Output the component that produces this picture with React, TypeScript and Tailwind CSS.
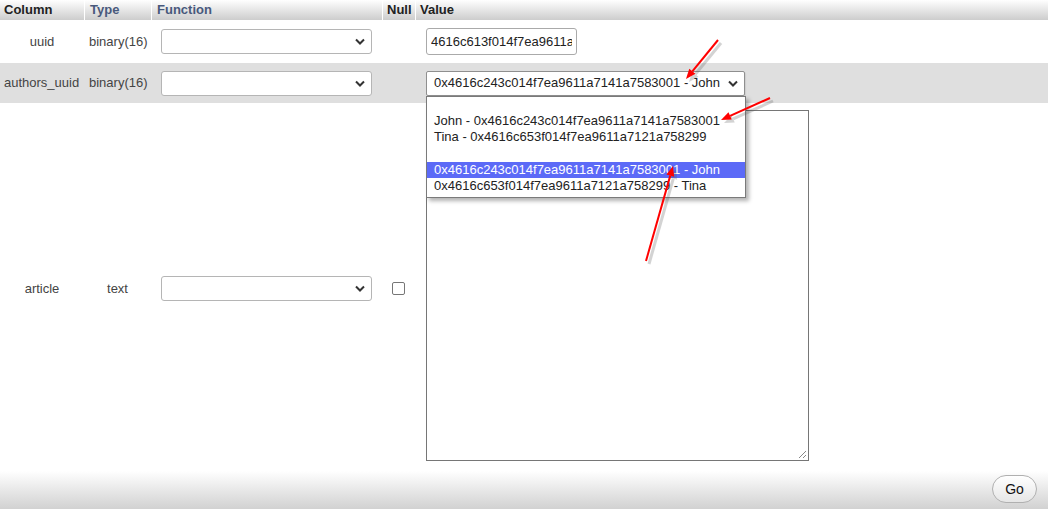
import React from 'react';

const font = { fontFamily: '"Liberation Sans", Arial, sans-serif' };

function Chevron() {
  return (
    <svg width="10" height="7" viewBox="0 0 10 7" className="shrink-0">
      <polyline points="1,1.5 5,5.5 9,1.5" fill="none" stroke="#333" strokeWidth="2" />
    </svg>
  );
}

function FuncSelect() {
  return (
    <div className="w-[211px] h-[25px] bg-white border border-[#b5b5b5] rounded-[3px] flex items-center justify-end pr-[6px]">
      <Chevron />
    </div>
  );
}

function Arrow({ x1, y1, x2, y2 }: { x1: number; y1: number; x2: number; y2: number }) {
  const a = Math.atan2(y2 - y1, x2 - x1);
  const len = 10;
  const w = 4;
  const bx = x2 - Math.cos(a) * len;
  const by = y2 - Math.sin(a) * len;
  const p1 = `${bx + Math.sin(a) * w},${by - Math.cos(a) * w}`;
  const p2 = `${bx - Math.sin(a) * w},${by + Math.cos(a) * w}`;
  return (
    <g>
      <g transform="translate(3,3)" opacity="0.25">
        <line x1={x1} y1={y1} x2={bx} y2={by} stroke="#555" strokeWidth="3" />
        <polygon points={`${x2},${y2} ${p1} ${p2}`} fill="#555" />
      </g>
      <line x1={x1} y1={y1} x2={bx} y2={by} stroke="#ff0000" strokeWidth="2" />
      <polygon points={`${x2},${y2} ${p1} ${p2}`} fill="#ff0000" />
    </g>
  );
}

export default function App() {
  const cols = 'grid grid-cols-[84px_67px_231px_33px_1fr]';
  return (
    <div className="relative w-[1053px] h-[509px] overflow-hidden bg-white text-[13px] text-[#444]" style={font}>
      <div className="w-[1048px]">
        {/* header */}
        <div className={`${cols} h-[20px] bg-gradient-to-b from-white to-[#cdcdcd] font-bold leading-[20px]`}>
          <div className="pl-[4px] text-[#222]">Column</div>
          <div className="pl-[5px] border-l border-white text-[#48597c]">Type</div>
          <div className="pl-[5px] border-l border-white text-[#48597c]">Function</div>
          <div className="pl-[4px] border-l border-white text-[#222]">Null</div>
          <div className="pl-[4px] border-l border-white text-[#222]">Value</div>
        </div>

        {/* uuid */}
        <div className={`${cols} h-[43px] items-center`}>
          <div className="text-center">uuid</div>
          <div className="pl-[5px]">binary(16)</div>
          <div className="pl-[10px]"><FuncSelect /></div>
          <div />
          <div className="pl-[11px]">
            <div className="w-[151px] h-[27px] border border-[#aaa] rounded-[3px] bg-white pl-[4px] pr-[4px] flex items-center overflow-hidden whitespace-nowrap text-[#222]">
              <span className="overflow-hidden">4616c613f014f7ea9611a7141a7583001</span>
            </div>
          </div>
        </div>

        {/* authors_uuid */}
        <div className={`${cols} h-[40px] items-center bg-[#dfdfdf]`}>
          <div className="pl-[4px]">authors_uuid</div>
          <div className="pl-[5px]">binary(16)</div>
          <div className="pl-[10px]"><FuncSelect /></div>
          <div />
          <div className="pl-[11px] relative">
            <div className="w-[319px] h-[25px] border border-[#8f8f8f] rounded-[2px] bg-white pl-[7px] pr-[6px] flex items-center justify-between text-[#222] shadow-[1px_1px_1px_rgba(0,0,0,0.08)]">
              <span>0x4616c243c014f7ea9611a7141a7583001 - John</span>
              <Chevron />
            </div>
            {/* open dropdown list */}
            <div className="absolute left-[11px] top-[25px] z-10 w-[320px] bg-white border border-[#7a7a7a] pb-[3px] shadow-[3px_3px_4px_rgba(0,0,0,0.3)] text-[#222] leading-[16px]">
              <div className="h-[16px]" />
              <div className="h-[16px] pl-[7px]">John - 0x4616c243c014f7ea9611a7141a7583001</div>
              <div className="h-[16px] pl-[7px]">Tina - 0x4616c653f014f7ea9611a7121a758299</div>
              <div className="h-[17px]" />
              <div className="h-[16px] pl-[7px] bg-[#5c6af7] text-white">0x4616c243c014f7ea9611a7141a7583001 - John</div>
              <div className="h-[16px] pl-[7px]">0x4616c653f014f7ea9611a7121a758299 - Tina</div>
            </div>
          </div>
        </div>

        {/* article */}
        <div className={`${cols} items-center pt-[7px] pb-[10px]`}>
          <div className="text-center mt-[6px]">article</div>
          <div className="text-center mt-[6px]">text</div>
          <div className="pl-[10px] mt-[6px]"><FuncSelect /></div>
          <div className="pl-[10px] mt-[6px]">
            <div className="w-[13px] h-[13px] border border-[#767676] rounded-[2px] bg-white" />
          </div>
          <div className="pl-[11px]">
            <div className="relative w-[383px] h-[351px] border border-[#767676] bg-white">
              <svg width="10" height="10" viewBox="0 0 10 10" className="absolute right-[1px] bottom-[1px]">
                <line x1="9" y1="2" x2="2" y2="9" stroke="#888" strokeWidth="1" />
                <line x1="9" y1="6" x2="6" y2="9" stroke="#888" strokeWidth="1" />
              </svg>
            </div>
          </div>
        </div>

        {/* footer */}
        <div className="h-[40px] bg-gradient-to-b from-white to-[#cfcfcf] flex items-start justify-end pr-[11px] pt-[4px]">
          <button className="w-[45px] h-[28px] rounded-full border border-[#b0b0b0] bg-gradient-to-b from-white to-[#e6e6e6] text-[14px] text-[#111]" style={font}>
            Go
          </button>
        </div>
      </div>

      {/* annotation arrows */}
      <svg className="absolute inset-0 pointer-events-none z-20" width="1053" height="509">
        <Arrow x1={718} y1={40} x2={686} y2={79} />
        <Arrow x1={770} y1={98} x2={721} y2={120} />
        <Arrow x1={646} y1={261} x2={673} y2={166} />
      </svg>
    </div>
  );
}
